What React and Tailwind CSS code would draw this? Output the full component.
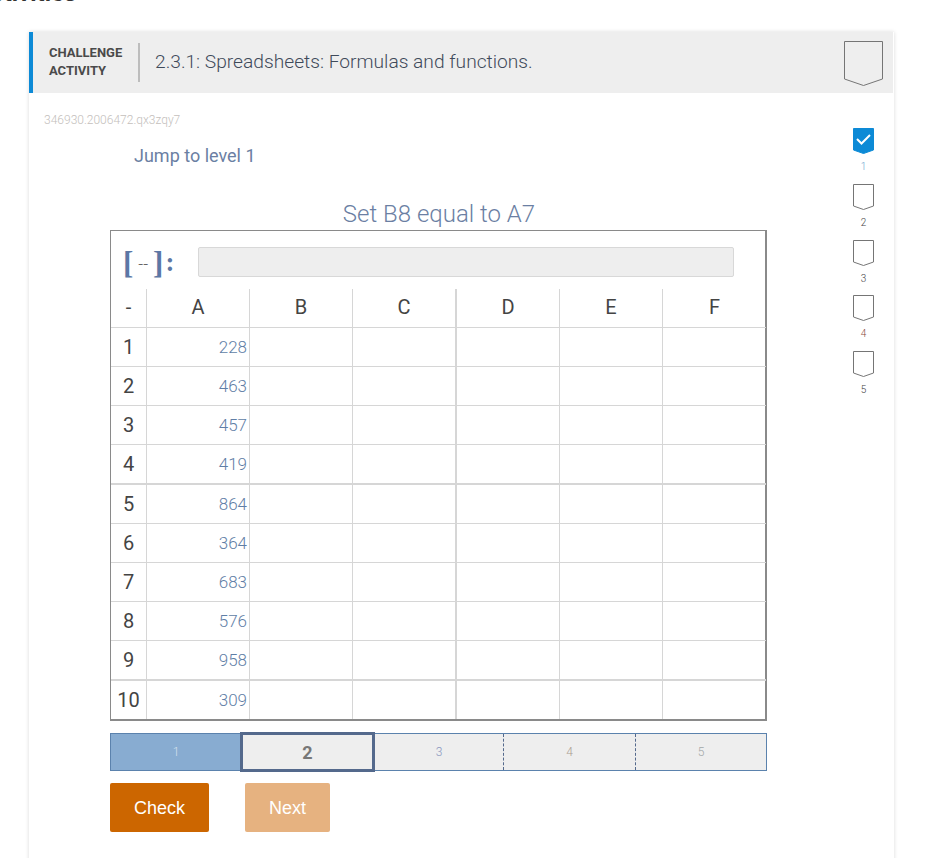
import React from 'react'

const values = [228, 463, 457, 419, 864, 364, 683, 576, 958, 309]
const cols = ['A', 'B', 'C', 'D', 'E', 'F']
const font = "font-['Roboto',sans-serif]"

// little ribbon shape used for the level markers
const Ribbon = ({ big, done }) => {
    const w = big ? 39 : 21
    const h = big ? 45 : 26
    const notch = big ? 6 : 3
    const pts = `0.5,0.5 ${w - 0.5},0.5 ${w - 0.5},${h - notch - 1} ${w / 2},${h - 0.5} 0.5,${h - notch - 1}`
    return (
        <svg width={w} height={h} viewBox={`0 0 ${w} ${h}`} className="block shrink-0">
            <polygon points={pts} fill={done ? '#0d8ad6' : 'none'} stroke={done ? '#0d8ad6' : '#757575'} strokeWidth="1" strokeLinejoin="miter" />
            {done && <path d="M4 11 L8.5 15.5 L17 7" fill="none" stroke="#fff" strokeWidth="2" />}
        </svg>
    )
}

const Sheet = () => {
    return (
        <div className="w-[657px] h-[491px] border border-[#8a8a8a] border-b-2 border-r-2 bg-white">
            <div className="h-[58px] flex items-start pt-[16px] pl-[12px]">
                <div className="w-[75px] h-[30px] flex items-center text-[#5c77a5] font-['Liberation_Serif',serif]">
                    <span className="text-[31px] font-bold leading-none">[</span>
                    <span className="text-[17px] text-[#555] ml-[5px] mr-[5px] mt-[6px] font-light font-['Roboto',sans-serif]">--</span>
                    <span className="text-[31px] font-bold leading-none">]</span>
                    <span className="text-[27px] font-bold leading-none ml-[2px]">:</span>
                </div>
                <div className="w-[536px] h-[30px] bg-[#eeeeee] border border-[#d8d8d8] rounded-[2px]"></div>
            </div>
            <div className="grid grid-cols-[36px_103px_103px_104px_103px_103px_103px]">
                <div className="h-[38px] pb-[2px] flex items-center justify-center border-r border-[#d6d6d6] text-[20px] text-[#444]">-</div>
                {cols.map((c) => (
                    <div key={c} className={`h-[38px] pb-[2px] flex items-center justify-center border-[#d6d6d6] text-[20px] text-[#444] ${c === 'C' ? 'border-r-2' : 'border-r'} ${c === 'F' ? 'border-r-0' : ''}`}>{c}</div>
                ))}
                {values.map((v, i) => (
                    <React.Fragment key={v}>
                        <div className={`flex items-center justify-center border-r border-[#d6d6d6] text-[20px] text-[#444] ${i === 4 || i === 9 ? 'border-t-2 h-[40px]' : 'border-t h-[39px]'}`}>{i + 1}</div>
                        <div className={`flex items-end justify-end pr-[2px] pb-[9px] border-r border-[#d6d6d6] text-[17px] leading-[20px] font-light text-[#5f7ea6] ${i === 4 || i === 9 ? 'border-t-2' : 'border-t'}`}>{v}</div>
                        {['B', 'C', 'D', 'E', 'F'].map((c) => (
                            <div key={c} className={`border-[#d6d6d6] ${i === 4 || i === 9 ? 'border-t-2' : 'border-t'} ${c === 'C' ? 'border-r-2' : c === 'F' ? '' : 'border-r'}`}></div>
                        ))}
                    </React.Fragment>
                ))}
            </div>
        </div>
    )
}

const Progress = () => {
    return (
        <div className="w-[657px] h-[38px] mt-[12px] flex border border-[#5b82ad] bg-[#eeeeee] text-[12px] font-light">
            <div className="w-[130px] flex items-center justify-center bg-[#88acd1] text-[#d5e0ec]">1</div>
            <div className="w-[135px] h-[40px] -mt-[2px] -ml-[1px] shrink-0 flex items-center justify-center border-[3px] border-[#54698c] text-[18px] font-bold text-[#777777] bg-[#eeeeee]">2</div>
            <div className="w-[129px] flex items-center justify-center text-[#8c98c0] border-r border-dashed border-[#54698c]">3</div>
            <div className="w-[132px] flex items-center justify-center text-[#aa9c90] border-r border-dashed border-[#54698c]">4</div>
            <div className="flex-1 flex items-center justify-center text-[#a3a8a8]">5</div>
        </div>
    )
}

export default function App() {
    return (
        <div className={`w-[928px] h-[858px] overflow-hidden bg-white ${font}`}>
            <div className="h-[32px] -mt-[19px]">
                <h2 className="text-[24px] leading-[24px] font-bold text-[#333] -ml-[25px]">Activities</h2>
            </div>
            <div className="ml-[29px] mt-[19px] w-[865px] h-[900px] bg-white shadow-[0_0_4px_rgba(0,0,0,0.15)]">
                <div className="w-[864px] h-[61px] flex items-center bg-[#eeeeee] border-l-4 border-[#0d8ad6] pl-[16px] pr-[10px]">
                    <div className="w-[89px] -mt-[2px] text-[13px] leading-[18px] font-bold text-[#4a4a4a] shrink-0">CHALLENGE<br />ACTIVITY</div>
                    <div className="w-[2px] h-[39px] bg-[#bdbdbd] shrink-0"></div>
                    <div className="ml-[15px] text-[19.2px] font-light text-[#3f4a5a] flex-1">2.3.1: Spreadsheets: Formulas and functions.</div>
                    <div className="mt-[2px]"><Ribbon big /></div>
                </div>
                <div className="flex">
                    <div className="w-[808px]">
                        <div className="pl-[15px] pt-[20px] text-[12px] leading-[14px] font-light text-[#c4c0bc]">346930.2006472.qx3zqy7</div>
                        <div className="pl-[105px] pt-[16px] text-[18px] leading-[26px] text-[#6b7fa3]">Jump to level 1</div>
                        <div className="pl-[81px] mt-[34px]">
                            <div className="w-[657px] text-center text-[24px] leading-[28px] font-light text-[#6b7fa3] -mt-[3px] mb-[2px] pl-[1px]">Set B8 equal to A7</div>
                            <Sheet />
                            <Progress />
                            <div className="flex mt-[12px]">
                                <button className="w-[99px] h-[49px] pt-[2px] rounded-[2px] bg-[#cc6600] text-white text-[18px] font-['Liberation_Sans',sans-serif]">Check</button>
                                <button className="w-[85px] h-[49px] pt-[2px] ml-[36px] rounded-[2px] bg-[#e6b280] text-white text-[18px] font-['Liberation_Sans',sans-serif]">Next</button>
                            </div>
                        </div>
                    </div>
                    <div className="w-[57px] pt-[35px] flex flex-col items-start pl-[16px]">
                        {[1, 2, 3, 4, 5].map((n, i) => (
                            <div key={n} className={`w-[21px] flex flex-col items-center ${i === 2 ? 'h-[55px]' : 'h-[56px]'}`}>
                                <Ribbon done={i === 0} />
                                <span className={`text-[10px] leading-[12px] mt-[7px] font-light ${i === 0 ? 'text-[#6fa8d0]' : i === 3 ? 'text-[#8a4a40]' : 'text-[#444]'}`}>{n}</span>
                            </div>
                        ))}
                    </div>
                </div>
            </div>
        </div>
    )
}
